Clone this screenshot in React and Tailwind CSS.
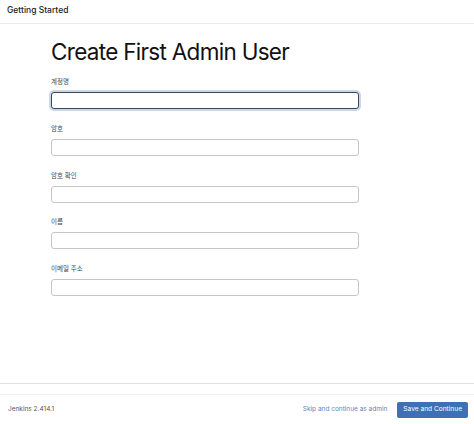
const fields = ['계정명', '암호', '암호 확인', '이름', '이메일 주소'];

export default function App() {
  return (
    <div
      className="flex h-[424px] w-[474px] flex-col bg-white text-[#222]"
      style={{ fontFamily: 'Inter, "Noto Sans CJK KR", sans-serif' }}
    >
      {/* header */}
      <div className="flex h-[24px] shrink-0 items-center border-b border-[#ececec] px-[7px] pb-[3px]">
        <span className="text-[8.5px] font-medium text-[#222]">Getting Started</span>
      </div>

      {/* body */}
      <div className="flex-1 pl-[51px] pt-[14px]">
        <h1 className="text-[22.5px] leading-[28px] font-normal tracking-[-0.7px] text-[#111]">
          Create First Admin User
        </h1>
        <div className="mt-[12px] flex flex-col">
          {fields.map((label, i) => (
            <div key={label} className="mb-[15.75px] flex flex-col">
              <label className="h-[8px] text-[6.5px] leading-[8px] font-normal text-[#444]">{label}</label>
              <input
                type={i === 1 || i === 2 ? 'password' : 'text'}
                className={
                  i === 0
                    ? 'mt-[6px] h-[17px] w-[308px] rounded-[3px] border-[1.5px] border-[#3c4858] bg-white ring-2 ring-[#c9d7e9] outline-none'
                    : 'mt-[6px] h-[17px] w-[308px] rounded-[3px] border border-[#c6c6c6] bg-white outline-none'
                }
              />
            </div>
          ))}
        </div>
      </div>

      {/* footer */}
      <div className="h-[11px] shrink-0 border-t border-[#e2e2e2]" />
      <div className="flex h-[30px] shrink-0 items-center justify-between border-t border-[#f1f1f1] pl-[8px] pr-[6px]">
        <span className="text-[6.5px] text-[#555]">Jenkins 2.414.1</span>
        <div className="flex items-center gap-[10px]">
          <a className="text-[6.5px] text-[#5a85c3]">Skip and continue as admin</a>
          <button className="h-[16px] rounded-[2px] bg-[#3f70b5] px-[6px] text-[6.6px] text-white">
            Save and Continue
          </button>
        </div>
      </div>
    </div>
  );
}
